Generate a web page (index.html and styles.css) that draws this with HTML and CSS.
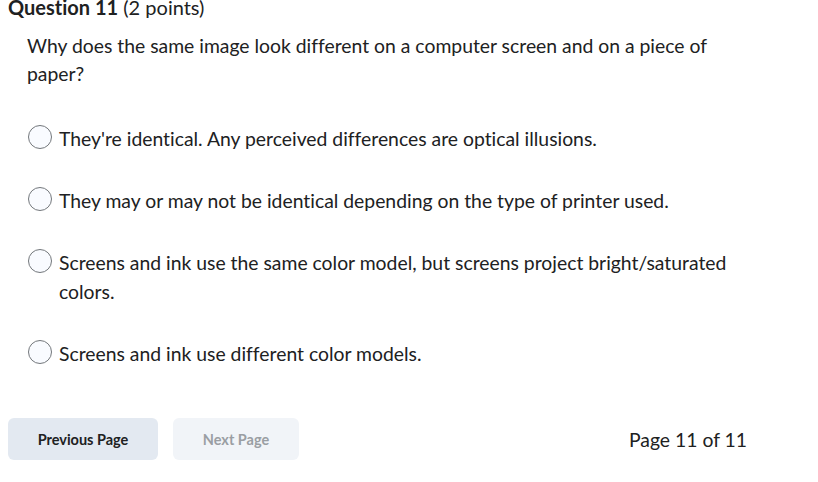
FILE: index.html
```html
<!DOCTYPE html>
<html lang="en">
<head>
<meta charset="utf-8">
<title>Question 11</title>
<link rel="stylesheet" href="styles.css">
</head>
<body>
<div class="page">
  <h2 class="q-title"><span class="q-num">Question 11</span> <span class="q-points">(2 points)</span></h2>
  <div class="q-body">
    <p class="q-text">Why does the same image look different on a computer screen and on a piece of paper?</p>
    <div class="options">
      <label class="option"><span class="radio"></span><span class="opt-text">They're identical. Any perceived differences are optical illusions.</span></label>
      <label class="option"><span class="radio"></span><span class="opt-text">They may or may not be identical depending on the type of printer used.</span></label>
      <label class="option"><span class="radio"></span><span class="opt-text">Screens and ink use the same color model, but screens project bright/saturated colors.</span></label>
      <label class="option"><span class="radio"></span><span class="opt-text">Screens and ink use different color models.</span></label>
    </div>
  </div>
  <div class="footer">
    <button class="btn btn-prev">Previous Page</button>
    <button class="btn btn-next">Next Page</button>
    <div class="page-count">Page 11 of 11</div>
  </div>
</div>
</body>
</html>
```

FILE: styles.css
```css
* { box-sizing: border-box; }
html, body { margin: 0; padding: 0; background: #ffffff; }
body {
  font-family: Lato, "Open Sans", sans-serif;
  font-variant-ligatures: none;
  color: #202122;
  width: 818px;
  height: 482px;
  overflow: hidden;
}
.page {
  padding: 0 71px 0 8px;
}
.q-title {
  margin: -5px 0 0 0;
  font-size: 20px;
  line-height: 24px;
  font-weight: 400;
}
.q-num { font-weight: 700; }
.q-body {
  padding-left: 19px;
}
.q-text {
  margin: 13px 0 0 0;
  font-size: 19.35px;
  line-height: 28px;
}
.options {
  display: flex;
  flex-direction: column;
  gap: 33px;
  margin-top: 36px;
}
.option {
  display: flex;
  align-items: flex-start;
  gap: 7px;
  font-size: 19.35px;
  line-height: 29px;
}
.radio {
  flex: none;
  width: 24px;
  height: 24px;
  margin-top: 1px;
  margin-left: 1px;
  border: 1px solid #73777b;
  border-radius: 50%;
  background: #f9fbff;
}
.footer {
  display: flex;
  align-items: center;
  margin-top: 50px;
}
.btn {
  font-family: Lato, "Open Sans", sans-serif;
  font-variant-ligatures: none;
  font-weight: 700;
  font-size: 14.5px;
  height: 42px;
  border: none;
  border-radius: 6px;
  padding: 0;
}
.btn-prev {
  width: 150px;
  background: #e3e9f1;
  color: #202122;
}
.btn-next {
  width: 126px;
  margin-left: 15px;
  background: #f1f4f8;
  color: #9a9ea3;
}
.page-count {
  margin-left: auto;
  font-size: 19.35px;
  color: #202122;
}
```
